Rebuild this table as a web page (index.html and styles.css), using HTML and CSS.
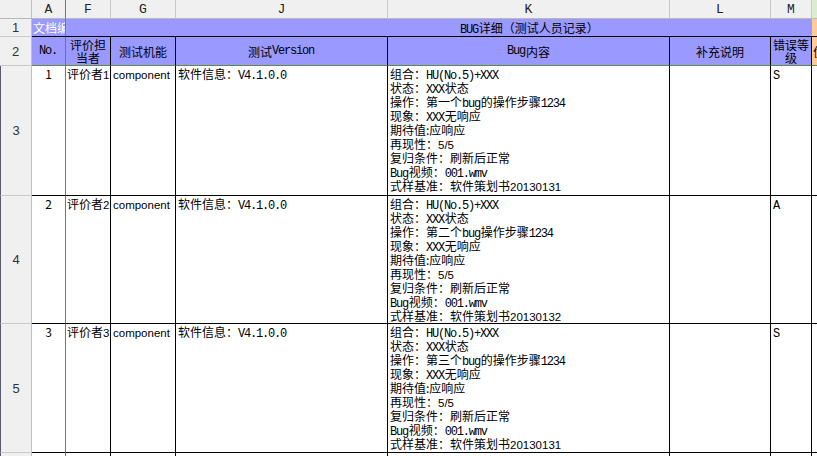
FILE: index.html
```html
<!DOCTYPE html>
<html lang="zh-CN">
<head>
<meta charset="utf-8">
<title>BUG详细</title>
<link rel="stylesheet" href="styles.css">
</head>
<body>
<div class="sheet">
  <div class="corner"></div>
  <div class="ch ca">A</div>
  <div class="ch">F</div>
  <div class="ch">G</div>
  <div class="ch">J</div>
  <div class="ch">K</div>
  <div class="ch">L</div>
  <div class="ch">M</div>
  <div class="ch chn"></div>

  <div class="rh">1</div>
  <div class="t1 t1a">文档编号</div>
  <div class="t1 t1m"><span class="m">BUG</span>详细（测试人员记录）</div>
  <div class="t1 t1n"></div>

  <div class="rh">2</div>
  <div class="h ca"><span class="m">No.</span></div>
  <div class="h">评价担当者</div>
  <div class="h">测试机能</div>
  <div class="h">测试<span class="m">Version</span></div>
  <div class="h"><span class="m">Bug</span>内容</div>
  <div class="h">补充说明</div>
  <div class="h">错误等级</div>
  <div class="h hn">优先度</div>

  <div class="rh rs">3</div>
  <div class="d ca num">1</div>
  <div class="d df">评价者<span class="s">1</span></div>
  <div class="d"><span class="s">component</span></div>
  <div class="d">软件信息：<span class="m">V4.1.0.0</span></div>
  <div class="d">组合：<span class="m">HU(No.5)+XXX</span><br>状态：<span class="m">XXX</span>状态<br>操作：第一个<span class="m">bug</span>的操作步骤<span class="m">1234</span><br>现象：<span class="m">XXX</span>无响应<br>期待值:应响应<br>再现性：<span class="s">5/5</span><br>复归条件：刷新后正常<br><span class="m">Bug</span>视频：<span class="m">001.wmv</span><br>式样基准：软件策划书<span class="s">20130131</span></div>
  <div class="d"></div>
  <div class="d"><span class="m">S</span></div>
  <div class="d dn"></div>

  <div class="rh rs">4</div>
  <div class="d ca num">2</div>
  <div class="d df">评价者<span class="s">2</span></div>
  <div class="d"><span class="s">component</span></div>
  <div class="d">软件信息：<span class="m">V4.1.0.0</span></div>
  <div class="d">组合：<span class="m">HU(No.5)+XXX</span><br>状态：<span class="m">XXX</span>状态<br>操作：第二个<span class="m">bug</span>操作步骤<span class="m">1234</span><br>现象：<span class="m">XXX</span>无响应<br>期待值:应响应<br>再现性：<span class="s">5/5</span><br>复归条件：刷新后正常<br><span class="m">Bug</span>视频：<span class="m">001.wmv</span><br>式样基准：软件策划书<span class="s">20130132</span></div>
  <div class="d"></div>
  <div class="d"><span class="m">A</span></div>
  <div class="d dn"></div>

  <div class="rh rs">5</div>
  <div class="d ca num">3</div>
  <div class="d df">评价者<span class="s">3</span></div>
  <div class="d"><span class="s">component</span></div>
  <div class="d">软件信息：<span class="m">V4.1.0.0</span></div>
  <div class="d">组合：<span class="m">HU(No.5)+XXX</span><br>状态：<span class="m">XXX</span>状态<br>操作：第三个<span class="m">bug</span>的操作步骤<span class="m">1234</span><br>现象：<span class="m">XXX</span>无响应<br>期待值:应响应<br>再现性：<span class="s">5/5</span><br>复归条件：刷新后正常<br><span class="m">Bug</span>视频：<span class="m">001.wmv</span><br>式样基准：软件策划书<span class="s">20130131</span></div>
  <div class="d"></div>
  <div class="d"><span class="m">S</span></div>
  <div class="d dn"></div>

  <div class="rh rs">6</div>
  <div class="d ca"></div>
  <div class="d"></div>
  <div class="d"></div>
  <div class="d"></div>
  <div class="d"></div>
  <div class="d"></div>
  <div class="d"></div>
  <div class="d dn"></div>
</div>
</body>
</html>
```
FILE: styles.css
```css
html, body {
  margin: 0;
  padding: 0;
}
body {
  width: 817px;
  height: 456px;
  overflow: hidden;
  background: #ffffff;
  font-family: "Noto Sans CJK SC", sans-serif;
  font-size: 12px;
  color: #000;
}
.sheet {
  display: grid;
  grid-template-columns: 32px 34px 45px 65px 212px 282px 101px 41px 60px;
  grid-template-rows: 19px 18px 29px 130px 128px 129px 40px;
  width: max-content;
}
.sheet > div {
  box-sizing: border-box;
  overflow: hidden;
  border-right: 1px solid #000;
  border-bottom: 1px solid #000;
}
.m {
  font-family: "Liberation Mono", monospace;
  font-size: 12px;
  letter-spacing: -1.2px;
  line-height: 0;
  margin-right: 0.8px;
}
.s {
  font-family: "Liberation Sans", sans-serif;
  font-size: 11.5px;
  line-height: 0;
}

/* column headers */
.sheet > .corner {
  background: #f0f0f0;
  border-right-color: #c0c0c0;
  border-bottom-color: #b8b8b8;
}
.sheet > .ch {
  background: #f0f0f0;
  border-right-color: #c8c8c8;
  border-bottom-color: #b8b8b8;
  text-align: center;
  font-family: "Liberation Mono", monospace;
  font-size: 13px;
  line-height: 20px;
  color: #222;
}
.sheet > .ch.ca {
  border-right-color: #608c3c;
}
.sheet > .chn {
  background: #dcecd0;
  border-right: none;
}

/* row headers */
.sheet > .rh {
  background: #f0f0f0;
  border-right-color: #c0c0c0;
  border-bottom-color: #c8c8c8;
  display: flex;
  align-items: center;
  justify-content: center;
  font-family: "Liberation Sans", sans-serif;
  font-size: 13px;
  color: #333;
}
.sheet > .rh.rs {
  border-left: 1px solid #5a5a6a;
}

/* row 1 */
.sheet > .t1 {
  background: #9999ff;
  white-space: nowrap;
  line-height: 17px;
  border-right: none;
}
.sheet > .t1a {
  color: #fff;
  padding-left: 1px;
  border-right: 1px solid #608c3c;
}
.sheet > .t1m {
  grid-column: span 6;
  padding-left: 394px;
}
.sheet > .t1n {
  background: #ffcc99;
}

/* row 2 */
.sheet > .h {
  background: #9999ff;
  display: flex;
  align-items: center;
  justify-content: center;
  text-align: center;
  line-height: 13px;
  padding: 0 1px;
  border-bottom-color: #608c3c;
}
.sheet > .h.ca {
  border-right-color: #608c3c;
}
.sheet > .hn {
  background: #ffcc99;
  justify-content: flex-start;
  text-align: left;
  border-right: none;
}

/* data */
.sheet > .d {
  padding: 1px 2px 0 2px;
  line-height: 14px;
  white-space: nowrap;
}
.sheet > .d.df {
  padding-left: 1px;
  padding-right: 0;
}
.sheet > .d.ca {
  border-right-color: #608c3c;
  text-align: center;
}
.sheet > .dn {
  border-right: none;
}
```
